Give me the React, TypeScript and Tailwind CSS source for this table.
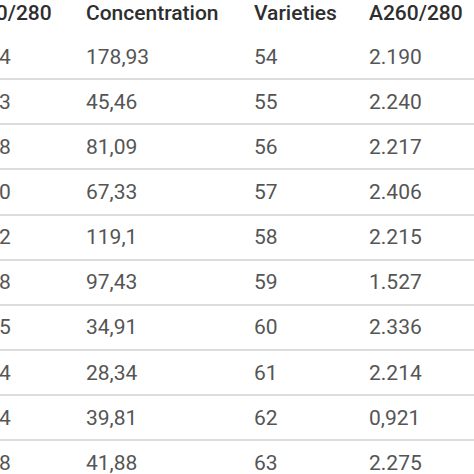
const rows = [
  ["2.194", "178,93", "54", "2.190"],
  ["2.213", "45,46", "55", "2.240"],
  ["2.148", "81,09", "56", "2.217"],
  ["2.330", "67,33", "57", "2.406"],
  ["2.212", "119,1", "58", "2.215"],
  ["2.198", "97,43", "59", "1.527"],
  ["2.255", "34,91", "60", "2.336"],
  ["2.174", "28,34", "61", "2.214"],
  ["2.064", "39,81", "62", "0,921"],
  ["2.308", "41,88", "63", "2.275"],
];

const cols = ["w-[128px]", "w-[168px]", "w-[115px]", "w-[110px]"];

export default function App() {
  return (
    <div className="h-[474px] w-[474px] overflow-hidden bg-white font-['Roboto',sans-serif] text-[21px]">
      <div className="ml-[-42px] w-[560px]">
        <div className="flex h-[35px] items-start pt-[1px] font-medium leading-[24px] text-[#2e2e2e]">
          <span className={cols[0]}>A260/280</span>
          <span className={cols[1]}>Concentration</span>
          <span className={cols[2]}>Varieties</span>
          <span className={cols[3]}>A260/280</span>
        </div>
        {rows.map((r, i) => (
          <div
            key={i}
            className="flex h-[45.15px] items-center border-b-2 border-[#dcdcdc] leading-[24px] text-[#555555]"
          >
            <span className={cols[0]}>{r[0]}</span>
            <span className={cols[1]}>{r[1]}</span>
            <span className={cols[2]}>{r[2]}</span>
            <span className={cols[3]}>{r[3]}</span>
          </div>
        ))}
      </div>
    </div>
  );
}
